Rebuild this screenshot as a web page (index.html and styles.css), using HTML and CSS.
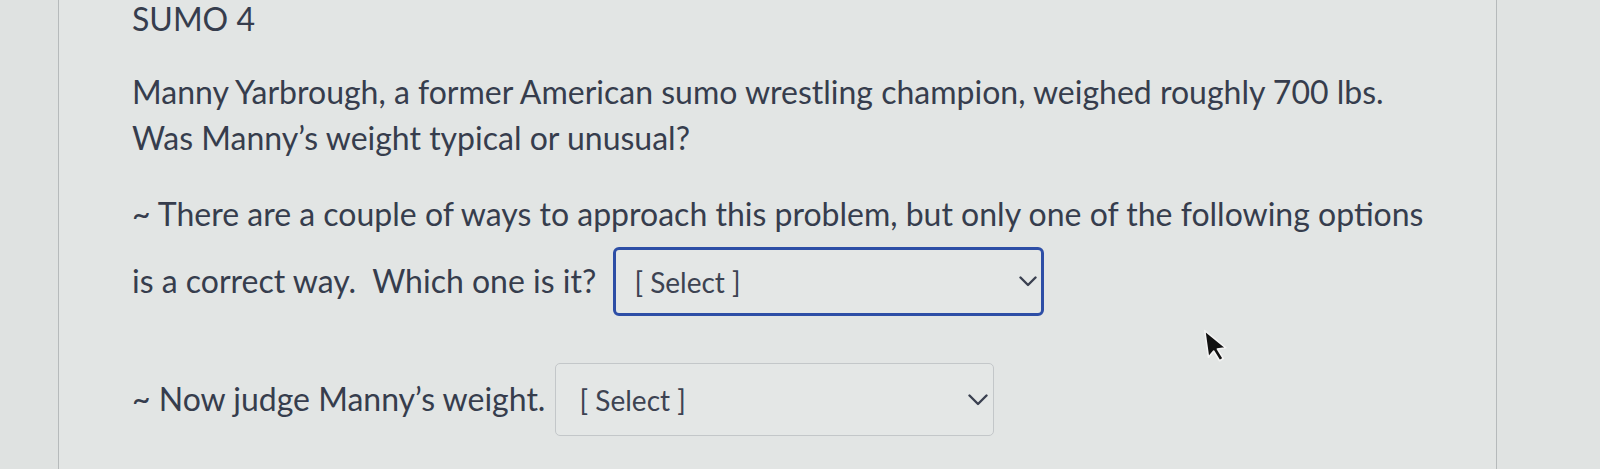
FILE: index.html
```html
<!DOCTYPE html>
<html lang="en">
<head>
<meta charset="utf-8">
<title>SUMO 4</title>
<link rel="stylesheet" href="styles.css">
</head>
<body>
<div class="page">
  <div class="rail rail-left"></div>
  <main class="content">
    <h1 class="title">SUMO 4</h1>
    <p class="para para-intro">Manny Yarbrough, a former American sumo wrestling champion, weighed roughly 700 lbs.<br>Was Manny’s weight typical or unusual?</p>
    <p class="para para-q1">~ There are a couple of ways to approach this problem, but only one of the following options is a correct way.&nbsp; Which one is it? <span class="select select-focus"><span class="select-label">[ Select ]</span><svg class="chev" width="18" height="11" viewBox="0 0 18 11"><path d="M1.5 1.5 L9 9 L16.5 1.5" fill="none" stroke="#3a4050" stroke-width="2.4" stroke-linecap="round" stroke-linejoin="round"/></svg></span></p>
    <p class="para para-q2">~ Now judge Manny’s weight. <span class="select select-plain"><span class="select-label">[ Select ]</span><svg class="chev" width="20" height="12" viewBox="0 0 20 12"><path d="M1.5 1.5 L10 10 L18.5 1.5" fill="none" stroke="#3a4050" stroke-width="2.4" stroke-linecap="round" stroke-linejoin="round"/></svg></span></p>
  </main>
  <div class="rail rail-right"></div>
  <svg class="cursor" width="24" height="38" viewBox="0 0 24 38"><path d="M2 2 L2 29 L8 23.5 L12.5 34 L16.5 32.3 L12 22 L20.5 22 Z" fill="#111" stroke="#f4f4f4" stroke-width="1.6" stroke-linejoin="round"/></svg>
</div>
</body>
</html>
```

FILE: styles.css
```css
html, body {
  margin: 0;
  padding: 0;
}

body {
  background: #e2e5e4;
  font-family: "Lato", "Liberation Sans", sans-serif;
  color: #363d4d;
  font-size: 32px;
  width: 1600px;
  height: 469px;
  overflow: hidden;
}

.page {
  position: relative;
  display: flex;
  height: 469px;
}

.rail {
  background: #dfe2e1;
}

.rail-left {
  width: 58px;
  border-right: 1px solid #b6babb;
}

.rail-right {
  width: 103px;
  border-left: 1px solid #b6babb;
  background: #e0e3e2;
}

.content {
  flex: 1;
  padding: 0 48px 0 73px;
}

.title {
  margin: 0;
  font-size: 32px;
  font-weight: 400;
  line-height: 38px;
}

.para {
  margin: 0;
  line-height: 46px;
}

.para-intro {
  margin-top: 31px;
}

.para-q1 {
  margin-top: 30px;
}

.para-q2 {
  margin-top: 47px;
}

.select {
  display: inline-flex;
  align-items: center;
  justify-content: space-between;
  box-sizing: border-box;
  vertical-align: baseline;
  background: #e4e7e6;
  color: #3d4352;
  font-size: 28px;
}

.select-label {
  line-height: 34px;
}

.select-focus {
  width: 431px;
  height: 69px;
  margin: 10px 0 0 9px;
  padding: 0 4px 0 18px;
  border: 3px solid #2d4ea6;
  border-radius: 6px;
}

.select-plain {
  width: 439px;
  height: 73px;
  margin-left: 1px;
  padding: 0 5px 0 24px;
  border: 1px solid #c3c7c9;
  border-radius: 5px;
}

.chev {
  flex: none;
}

.cursor {
  position: absolute;
  left: 1205px;
  top: 327px;
  transform: rotate(-8deg);
}
```
